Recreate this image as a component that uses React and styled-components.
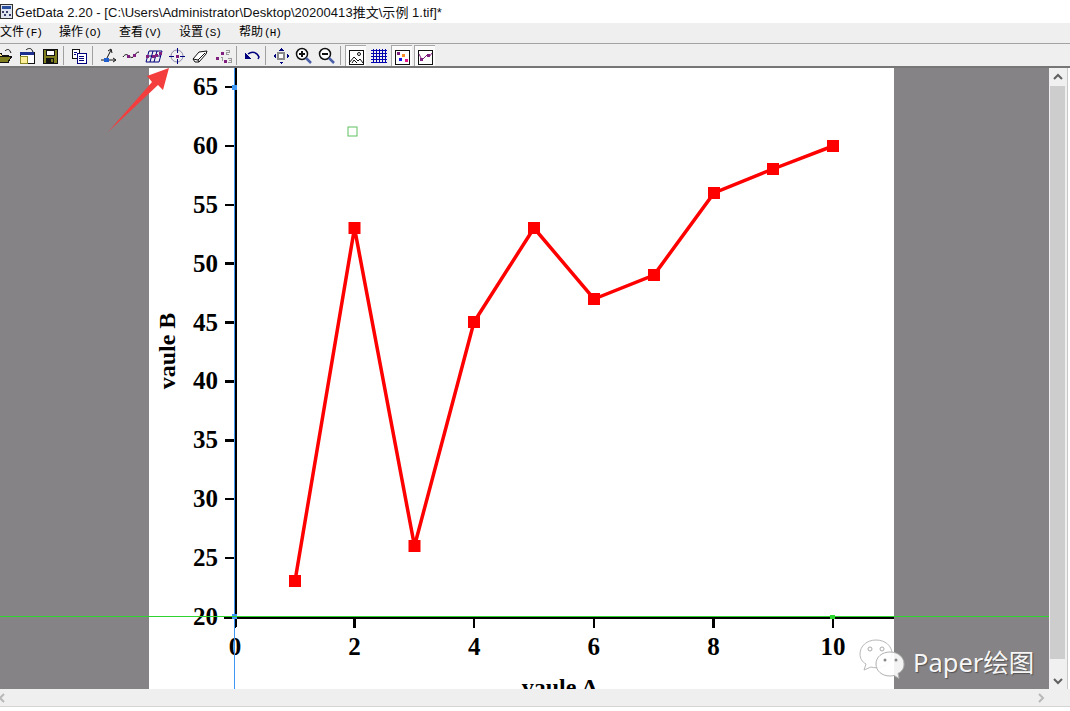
import React from 'react'
import styled, { createGlobalStyle } from 'styled-components'

const GlobalStyle = createGlobalStyle`
  html, body {
    margin: 0;
    padding: 0;
    background: #fff;
  }
`

const Window = styled.div`
  position: relative;
  width: 1070px;
  height: 711px;
  overflow: hidden;
  display: flex;
  flex-direction: column;
  background: #fff;
  font-family: 'Liberation Sans', 'Noto Sans CJK SC', sans-serif;
`

const TitleBar = styled.div`
  height: 23px;
  display: flex;
  align-items: center;
  gap: 2px;
  padding-bottom: 1px;
  box-sizing: border-box;
  font-size: 13px;
  letter-spacing: 0.03px;
  color: #111;
  background: #fff;
`

const MenuBar = styled.div`
  height: 21px;
  display: flex;
  align-items: center;
  gap: 19px;
  padding-bottom: 2px;
  box-sizing: border-box;
  background: #efefef;
  border-bottom: 1px solid #a3a3a3;
`

const MenuItem = styled.span`
  width: 41px;
  font-size: 12px;
  line-height: 16px;
  color: #000;
  white-space: nowrap;
  font-family: 'Noto Sans CJK SC', sans-serif;

  &:first-child {
    width: 40px;
  }

  & > i {
    font-style: normal;
    font-size: 11px;
    letter-spacing: -1px;
    margin-left: 1px;
    font-family: 'Liberation Mono', monospace;
  }
`

const Toolbar = styled.div`
  height: 22px;
  display: flex;
  align-items: flex-start;
  margin-left: -8px;
  background: #efefef;
  border-bottom: 2px solid #767676;
`

const ToolButton = styled.div`
  width: ${({ $on }) => ($on ? '21px' : '23px')};
  height: ${({ $on }) => ($on ? '21px' : '22px')};
  margin: ${({ $on }) => ($on ? '1px 1px 0' : '0')};
  padding-top: ${({ $on }) => ($on ? '1px' : '2px')};
  flex: none;
  display: flex;
  align-items: center;
  justify-content: center;
  box-sizing: border-box;
  background: ${({ $on }) => ($on ? '#fbfbfb' : 'transparent')};
  border-top: ${({ $on }) => ($on ? '1px solid #a8a8a8' : 'none')};
  border-left: ${({ $on }) => ($on ? '1px solid #a8a8a8' : 'none')};
`

const Divider = styled.div`
  width: 1px;
  height: 19px;
  margin: 2px 3px 0 2px;
  flex: none;
  background: #a0a0a0;
`

const Workspace = styled.div`
  flex: 1;
  display: flex;
  min-height: 0;
`

const Canvas = styled.div`
  position: relative;
  width: 1049px;
  flex: none;
  display: flex;
  justify-content: center;
  padding-right: 6px;
  box-sizing: border-box;
  background: #858385;
  overflow: hidden;
`

const Page = styled.svg`
  display: block;
  flex: none;
  width: 745px;
  height: 622px;
  background: #fff;
`

const CursorLine = styled.div`
  position: absolute;
  left: 0;
  right: 0;
  top: 548px;
  height: 1px;
  background: #2fd52f;
`

const VScroll = styled.div`
  width: 19px;
  flex: none;
  display: flex;
  flex-direction: column;
  align-items: center;
  box-sizing: border-box;
  padding: 0 2px 0 1px;
  background: #f0f0f0;
  border-right: 1px solid #c8c8c8;
`

const VThumb = styled.div`
  flex: 1;
  align-self: stretch;
  background: #cdcdcd;
`

const ScrollArrow = styled.div`
  height: ${({ $h }) => $h}px;
  padding-top: ${({ $pad }) => $pad || 0}px;
  box-sizing: border-box;
  display: flex;
  align-items: center;
  justify-content: center;
  flex: none;
`

const HScroll = styled.div`
  height: 17px;
  display: flex;
  align-items: center;
  justify-content: space-between;
  padding: 0 24px 0 0;
  background: #efefef;
  border-bottom: 1px solid #d4d4d4;
`

const BottomGap = styled.div`
  height: 4px;
  background: #fff;
`

const Watermark = styled.div`
  position: absolute;
  left: 859px;
  top: 639px;
  display: flex;
  align-items: center;
  gap: 7px;
`

const WatermarkText = styled.span`
  font-family: 'Noto Sans', 'Noto Sans CJK SC', sans-serif;
  font-size: 25.5px;
  color: #f6f6f6;
  text-shadow: 1px 1px 1px rgba(60, 60, 60, 0.7);
`

const ArrowMark = styled.svg`
  position: absolute;
  left: 100px;
  top: 60px;
  width: 80px;
  height: 80px;
`

const INK = '#00007f'
const DOT = '#7f1f7f'

const Icon = ({ children }) => (
  <svg width="18" height="18" viewBox="0 0 18 18" fill="none" shapeRendering="crispEdges">
    {children}
  </svg>
)

const OpenIcon = () => (
  <Icon>
    <path d="M1 6h5l1 2h6v7H1z" fill="#ffe98a" stroke="#111" />
    <path d="M1 15l3-6h13l-4 6z" fill="#7f7f1f" stroke="#111" />
    <path d="M10 4c2-2 4-2 5 0l1 2" stroke="#111" shapeRendering="auto" />
  </Icon>
)

const ReopenIcon = () => (
  <Icon>
    <rect x="2" y="5" width="14" height="11" fill="#fff" stroke="#111" />
    <rect x="2" y="5" width="14" height="3" fill="#1d2f8f" />
    <rect x="2" y="9" width="7" height="7" fill="#ffef9a" stroke="#8a8a22" />
    <path d="M8 3c2-2 5-2 6 0l1 2" stroke="#111" shapeRendering="auto" />
  </Icon>
)

const SaveIcon = () => (
  <Icon>
    <path d="M2 2h14v14H2z" fill="#7f7f1f" stroke="#111" />
    <rect x="5" y="3" width="8" height="5" fill="#fff" stroke="#111" />
    <rect x="5" y="11" width="8" height="5" fill="#111" />
    <rect x="10" y="12" width="2" height="3" fill="#7f7f1f" />
  </Icon>
)

const CopyIcon = () => (
  <Icon>
    <path d="M2 2h7v9H2z" fill="#fff" stroke="#111" />
    <path d="M7 6h9v10H7z" fill="#fff" stroke={INK} />
    <path d="M9 9h5M9 11h5M9 13h5M4 5h3M4 7h2" stroke={INK} />
  </Icon>
)

const AxesIcon = () => (
  <Icon>
    <path d="M2 13h14M14 11l3 2-3 2M6 15L12 3M9 4l3-2 1 4" stroke="#111" shapeRendering="auto" />
    <rect x="5" y="11" width="5" height="4" fill="#1f5fd0" />
  </Icon>
)

const LineIcon = () => (
  <Icon>
    <path d="M1 10c2-3 4-3 6-1s4 2 5 0 3-4 5-4" stroke="#111" shapeRendering="auto" />
    <rect x="5" y="8" width="3" height="3" fill={DOT} />
    <rect x="11" y="7" width="3" height="3" fill={DOT} />
  </Icon>
)

const GridIcon = () => (
  <Icon>
    <path d="M4 4h13l-3 11H1zM8 4l-3 11M12 4l-3 11M3 9h13" stroke={INK} shapeRendering="auto" />
    <rect x="1" y="8" width="3" height="3" fill={DOT} />
    <rect x="7" y="8" width="3" height="3" fill={DOT} />
    <rect x="10" y="7" width="3" height="3" fill={DOT} />
    <rect x="14" y="5" width="3" height="3" fill={DOT} />
  </Icon>
)

const TargetIcon = () => (
  <Icon>
    <circle cx="9" cy="9" r="6" stroke="#8a8aa8" shapeRendering="auto" />
    <path d="M9 1v5M9 12v5M1 9h5M12 9h5" stroke={INK} />
    <rect x="7.500" y="7.500" width="3" height="3" fill={DOT} />
  </Icon>
)

const EraserIcon = () => (
  <Icon>
    <path d="M2 12l6-7 8-1-1 3-7 8H4z" fill="#fff" stroke="#111" shapeRendering="auto" />
    <path d="M2 12l5 1 1 2M7 13l7-7" stroke="#111" shapeRendering="auto" />
  </Icon>
)

const PointsIcon = () => (
  <Icon>
    <rect x="2" y="10" width="3" height="3" fill={DOT} />
    <rect x="7" y="5" width="3" height="3" fill={DOT} />
    <rect x="10" y="13" width="3" height="3" fill={DOT} />
    <path d="M7 10h1v4M12 3h3v2h-3v2h3M14 11h3v2h-2 2v2h-3" stroke="#9a9a9a" />
  </Icon>
)

const UndoIcon = () => (
  <Icon>
    <path d="M5 7c4-3 9-2 11 3l-1 2" stroke={INK} strokeWidth="1.500" shapeRendering="auto" />
    <path d="M2 12V6l6 6z" fill={INK} />
  </Icon>
)

const PanIcon = () => (
  <Icon>
    <rect x="6" y="6" width="6" height="6" fill="#fff" stroke="#8a8a8a" strokeWidth="2" />
    <path d="M9 1l2.500 2.500h-5zM9 17l-2.500-2.500h5zM1 9l2.500-2.500v5zM17 9l-2.500 2.500v-5z" fill={INK} />
  </Icon>
)

const ZoomIcon = ({ plus }) => (
  <Icon>
    <circle cx="7" cy="7" r="5.500" fill="#fff" stroke="#111" strokeWidth="1.500" shapeRendering="auto" />
    <path d="M4 7h6" stroke="#111" strokeWidth="2" />
    {plus && <path d="M7 4v6" stroke="#111" strokeWidth="2" />}
    <path d="M11 11l5 5" stroke="#4a5fa8" strokeWidth="2.500" shapeRendering="auto" />
  </Icon>
)

const ImageIcon = () => (
  <Icon>
    <rect x="2" y="2" width="14" height="14" fill="#fff" stroke="#111" />
    <path d="M2 15l5-6 4 4 2-2 3 4M5 15l2-3 3 3" stroke="#111" shapeRendering="auto" />
    <circle cx="12" cy="6" r="1.500" stroke="#111" shapeRendering="auto" />
  </Icon>
)

const MeshIcon = () => (
  <Icon>
    <path d="M3 2v14M6 2v14M9 2v14M12 2v14M15 2v14M1 3h16M1 6h16M1 9h16M1 12h16M1 15h16" stroke="#0000b0" />
  </Icon>
)

const ScatterIcon = () => (
  <Icon>
    <rect x="2" y="2" width="14" height="14" fill="#fff" stroke="#111" />
    <rect x="4" y="4" width="3" height="3" fill={DOT} />
    <rect x="9" y="6" width="3" height="3" fill="#ff8c2a" />
    <rect x="6" y="10" width="3" height="3" fill="#1414e8" />
    <rect x="12" y="11" width="3" height="3" fill="#e81489" />
  </Icon>
)

const CurveIcon = () => (
  <Icon>
    <rect x="2" y="2" width="14" height="14" fill="#fff" stroke="#111" />
    <path d="M3 6l3 6 5-5 2 2 3-4" stroke={DOT} shapeRendering="auto" />
    <rect x="4" y="10" width="3" height="3" fill={DOT} />
    <rect x="11" y="6" width="3" height="3" fill={DOT} />
  </Icon>
)

const AppIcon = () => (
  <svg width="13" height="15" viewBox="0 0 13 15" shapeRendering="crispEdges">
    <rect x="0.500" y="0.500" width="12" height="14" fill="#dfe6f2" stroke="#333" />
    <rect x="2" y="2" width="9" height="3" fill="#2a4f9f" />
    <path d="M2 7h2v2H2zM6 7h2v2H6zM9 10h2v2H9zM4 10h2v2H4z" fill="#3a3f6a" />
  </svg>
)

const Chevron = ({ d, color }) => (
  <svg width="10" height="10" viewBox="0 0 10 10" fill="none">
    <path d={d} stroke={color} strokeWidth="2" />
  </svg>
)

const menus = [
  ['文件', 'F'],
  ['操作', 'O'],
  ['查看', 'V'],
  ['设置', 'S'],
  ['帮助', 'H'],
]

const toolGroups = [
  [<OpenIcon />, <ReopenIcon />, <SaveIcon />],
  [<CopyIcon />],
  [<AxesIcon />, <LineIcon />, <GridIcon />, <TargetIcon />, <EraserIcon />, <PointsIcon />],
  [<UndoIcon />],
  [<PanIcon />, <ZoomIcon plus />, <ZoomIcon />],
]

const viewTools = [
  [<ImageIcon />, true],
  [<MeshIcon />, false],
  [<ScatterIcon />, true],
  [<CurveIcon />, true],
]

const points = [
  [295, 581], [354.5, 228], [414.5, 546], [474, 322], [534, 228],
  [594, 299], [654, 275], [714, 193], [773, 169], [833, 146],
]

const yTicks = [65, 60, 55, 50, 45, 40, 35, 30, 25, 20]
const xTicks = [0, 2, 4, 6, 8, 10]
const yPos = (v) => 617 - ((v - 20) * 530) / 45
const xPos = (v) => 235 + v * 59.8

const Chart = () => (
  <Page viewBox="149 68 745 622">
    <g stroke="#000" strokeWidth="2.500" shapeRendering="crispEdges">
      <path d="M235.500 68V627M224 617.500H894" fill="none" />
      {yTicks.map((v) => (
        <path key={v} d={`M225 ${yPos(v)}H235`} />
      ))}
      {xTicks.map((v) => (
        <path key={v} d={`M${xPos(v)} 617V628`} />
      ))}
    </g>
    <g fontFamily="'Liberation Serif', serif" fontWeight="700" fontSize="25" fill="#000">
      {yTicks.map((v) => (
        <text key={v} x="218" y={yPos(v) + 8} textAnchor="end">{v}</text>
      ))}
      {xTicks.map((v) => (
        <text key={v} x={xPos(v)} y="655" textAnchor="middle">{v}</text>
      ))}
      <text x="560" y="695" fontSize="24" textAnchor="middle">vaule A</text>
      <text transform="translate(175 351) rotate(-90)" fontSize="24" textAnchor="middle">vaule B</text>
    </g>
    <polyline points={points.map((p) => p.join(',')).join(' ')} fill="none" stroke="#ff0000" strokeWidth="3.500" />
    {points.map(([x, y]) => (
      <rect key={x} x={x - 6} y={y - 6} width="12" height="12" fill="#ff0000" />
    ))}
    <rect x="234" y="68" width="1" height="622" fill="#3f97f5" />
    <rect x="232" y="85" width="5" height="5" fill="#3f97f5" />
    <rect x="232" y="614" width="5" height="5" fill="#3f97f5" />
    <rect x="830" y="615" width="5" height="4" fill="#2fd52f" />
    <rect x="348" y="127" width="9" height="9" fill="none" stroke="#5fc05f" strokeWidth="1" />
  </Page>
)

const WeChatLogo = () => (
  <svg width="47" height="42" viewBox="0 0 47 42">
    <path d="M17 1C8 1 1 7 1 15c0 4 2 8 6 10l-2 6 7-3c2 .5 3 .7 5 .7 9 0 16-6 16-14S26 1 17 1z" fill="#fff" fillOpacity="0.85" stroke="#b8b8b8" />
    <path d="M31 13c-8 0-14 5-14 12s6 12 14 12c1.500 0 3-.2 4-.6l5 3-1-5c4-2 6-5 6-9.400 0-7-6-12-14-12z" fill="#fff" fillOpacity="0.9" stroke="#b0b0b0" />
    <circle cx="11" cy="10" r="2" fill="none" stroke="#aaa" />
    <circle cx="23" cy="10" r="2" fill="none" stroke="#aaa" />
    <circle cx="26" cy="21" r="1.500" fill="#888" />
    <circle cx="37" cy="21" r="1.500" fill="#888" />
  </svg>
)

const App = () => (
  <Window>
    <GlobalStyle />
    <TitleBar>
      <AppIcon />
      <span>GetData 2.20 - [C:\Users\Administrator\Desktop\20200413推文\示例 1.tif]*</span>
    </TitleBar>
    <MenuBar>
      {menus.map(([label, key]) => (
        <MenuItem key={key}>
          {label}<i>({key})</i>
        </MenuItem>
      ))}
    </MenuBar>
    <Toolbar>
      {toolGroups.map((group, i) => (
        <React.Fragment key={i}>
          {group.map((icon, j) => (
            <ToolButton key={j}>{icon}</ToolButton>
          ))}
          <Divider />
        </React.Fragment>
      ))}
      {viewTools.map(([icon, on], i) => (
        <ToolButton key={i} $on={on}>{icon}</ToolButton>
      ))}
    </Toolbar>
    <Workspace>
      <Canvas>
        <Chart />
        <CursorLine />
      </Canvas>
      <VScroll>
        <ScrollArrow $h={18}><Chevron d="M1 7l4-4 4 4" color="#606060" /></ScrollArrow>
        <VThumb />
        <ScrollArrow $h={30} $pad={14}><Chevron d="M1 3l4 4 4-4" color="#606060" /></ScrollArrow>
      </VScroll>
    </Workspace>
    <HScroll>
      <Chevron d="M4 1L0 5l4 4" color="#b8b8b8" />
      <Chevron d="M3 1l4 4-4 4" color="#b8b8b8" />
    </HScroll>
    <BottomGap />
    <Watermark>
      <WeChatLogo />
      <WatermarkText>Paper绘图</WatermarkText>
    </Watermark>
    <ArrowMark viewBox="100 60 80 80">
      <path d="M108 132L152 82L147 76L169 68L163 90L158 85Z" fill="#f43d3d" />
    </ArrowMark>
  </Window>
)

export default App
